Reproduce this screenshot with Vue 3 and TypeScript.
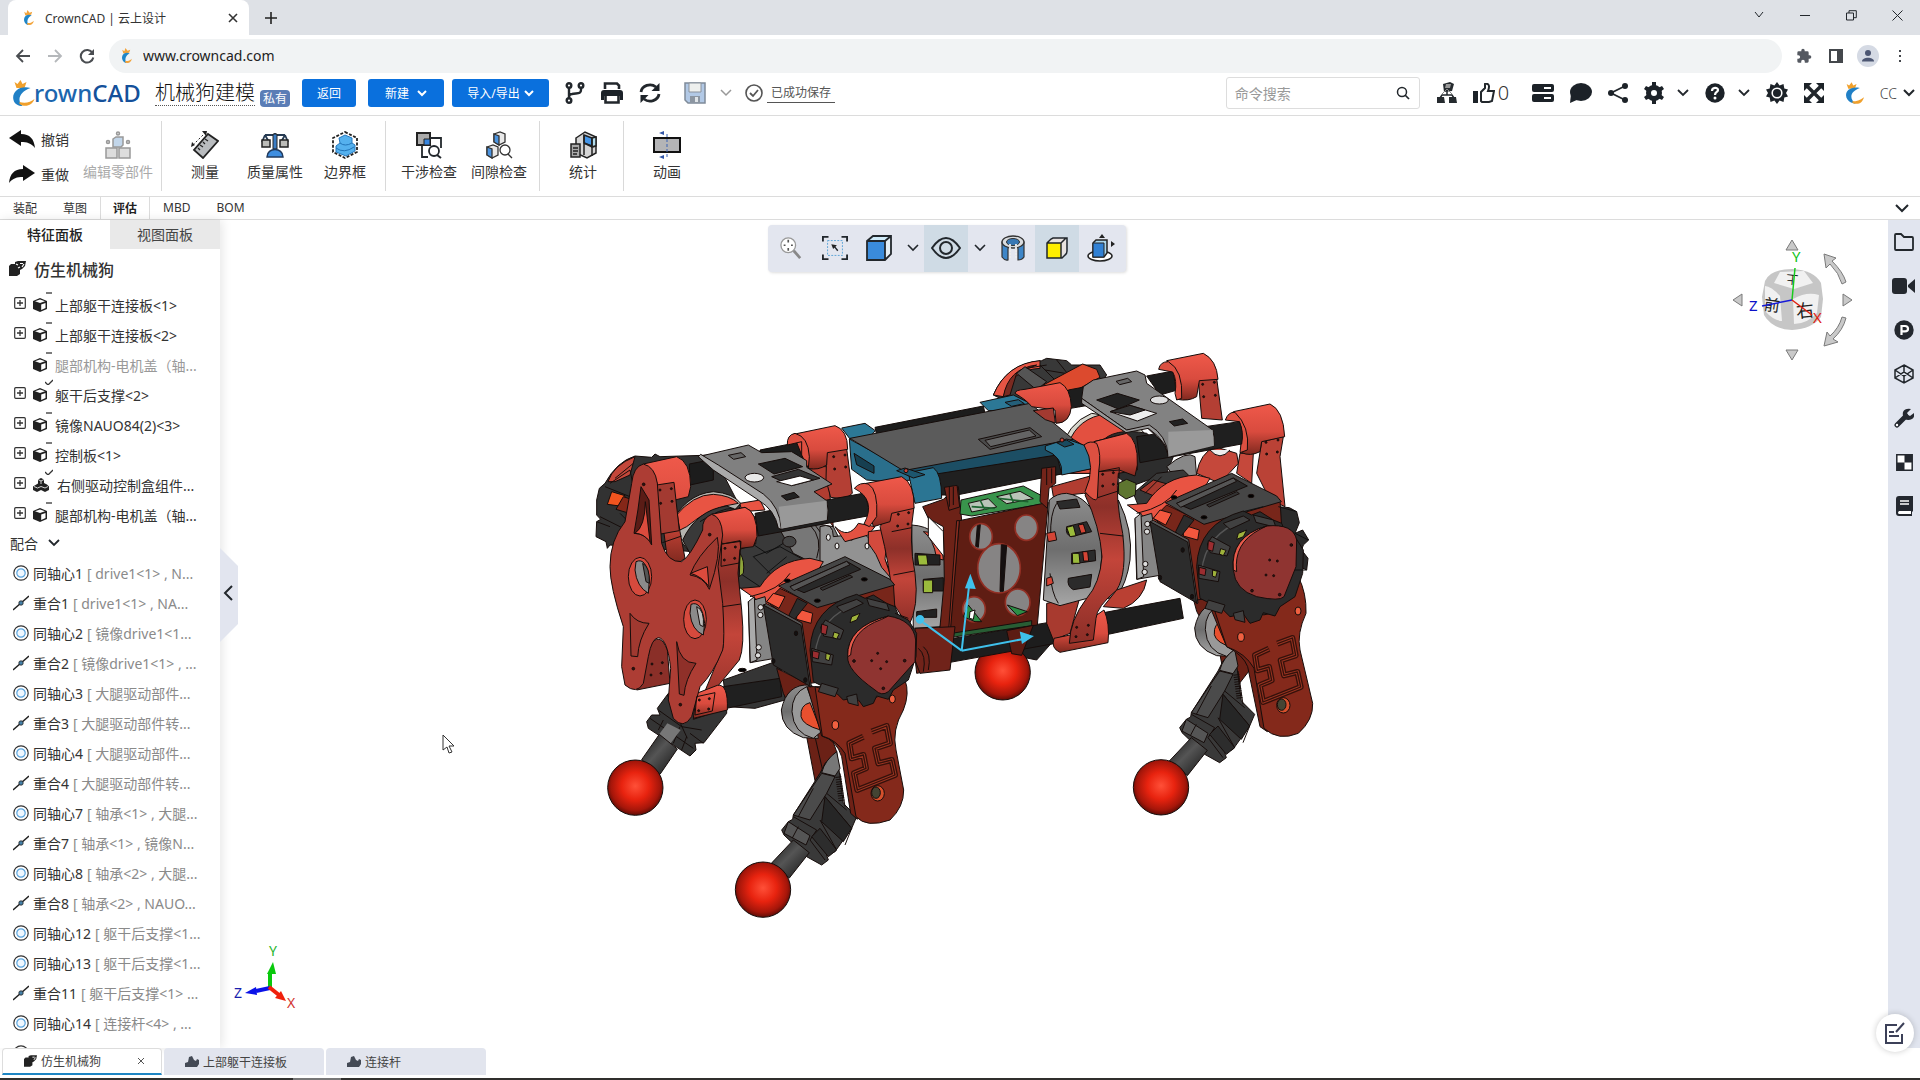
<script setup lang="ts">
import { ref } from 'vue'

interface TreeNode { label: string; mark: 'dash' | 'check'; expandable: boolean; hidden?: boolean; group?: boolean }
interface Mate { kind: 'concentric' | 'coincident'; name: string; refs: string }

const address = ref('www.crowncad.com')
const command = ref('')

const tree: TreeNode[] = [
  { label: '上部躯干连接板<1>', mark: 'dash', expandable: true },
  { label: '上部躯干连接板<2>', mark: 'dash', expandable: true },
  { label: '腿部机构-电机盖（轴...', mark: 'dash', expandable: false, hidden: true },
  { label: '躯干后支撑<2>', mark: 'check', expandable: true },
  { label: '镜像NAUO84(2)<3>', mark: 'dash', expandable: true },
  { label: '控制板<1>', mark: 'dash', expandable: true },
  { label: '右侧驱动控制盒组件...', mark: 'check', expandable: true, group: true },
  { label: '腿部机构-电机盖（轴...', mark: 'dash', expandable: true },
]

const mates: Mate[] = [
  { kind: 'concentric', name: '同轴心1', refs: '[ drive1<1> , N...' },
  { kind: 'coincident', name: '重合1', refs: '[ drive1<1> , NA...' },
  { kind: 'concentric', name: '同轴心2', refs: '[ 镜像drive1<1...' },
  { kind: 'coincident', name: '重合2', refs: '[ 镜像drive1<1> , ...' },
  { kind: 'concentric', name: '同轴心3', refs: '[ 大腿驱动部件...' },
  { kind: 'coincident', name: '重合3', refs: '[ 大腿驱动部件转...' },
  { kind: 'concentric', name: '同轴心4', refs: '[ 大腿驱动部件...' },
  { kind: 'coincident', name: '重合4', refs: '[ 大腿驱动部件转...' },
  { kind: 'concentric', name: '同轴心7', refs: '[ 轴承<1> , 大腿...' },
  { kind: 'coincident', name: '重合7', refs: '[ 轴承<1> , 镜像N...' },
  { kind: 'concentric', name: '同轴心8', refs: '[ 轴承<2> , 大腿...' },
  { kind: 'coincident', name: '重合8', refs: '[ 轴承<2> , NAUO...' },
  { kind: 'concentric', name: '同轴心12', refs: '[ 躯干后支撑<1...' },
  { kind: 'concentric', name: '同轴心13', refs: '[ 躯干后支撑<1...' },
  { kind: 'coincident', name: '重合11', refs: '[ 躯干后支撑<1> ...' },
  { kind: 'concentric', name: '同轴心14', refs: '[ 连接杆<4> , ...' },
  { kind: 'concentric', name: '', refs: '' },
]

const ribbonTabs = ['装配', '草图', '评估', 'MBD', 'BOM']
const docTabs = ['仿生机械狗', '上部躯干连接板', '连接杆']
</script>

<template>
  <div class="app">
    <div class="tabstrip">
      <div class="browser-tab">
        <svg class="fav" viewBox="0 0 24 32"><path d="M4 5l4 3 2-6 4 5 5-2-2 6-11 1z" fill="#f2a33a"/><path d="M18 12C8 8 2 16 4 23c1 4 5 7 8 7-4-7-2-14 6-18z" fill="#1f86c8"/><path d="M10 29c6 3 11-1 12-7-4 4-8 5-13 4z" fill="#f2a33a"/></svg>
        <span>CrownCAD | 云上设计</span>
        <button class="bare tab-x" aria-label="关闭标签页"><svg width="10" height="10" viewBox="0 0 10 10"><path d="M1 1l8 8M9 1l-8 8" stroke="#333" stroke-width="1.6"/></svg></button>
      </div>
      <button class="bare newtab" aria-label="新标签页"><svg width="12" height="12" viewBox="0 0 12 12"><path d="M6 0v12M0 6h12" stroke="#222" stroke-width="1.6"/></svg></button>
      <div class="winctl">
        <button class="bare" aria-label="搜索标签页"><svg width="10" height="8" viewBox="0 0 10 8"><path d="M1 1l4 5 4-5" class="ln thin"/></svg></button>
        <button class="bare" aria-label="最小化"><svg width="10" height="8" viewBox="0 0 10 8"><path d="M0 4.500h10" class="ln thin"/></svg></button>
        <button class="bare" aria-label="还原"><svg width="11" height="11" viewBox="0 0 11 11"><path d="M.5 3h7v7h-7zM3 3V.7h7.300v7H7.500" class="ln thin"/></svg></button>
        <button class="bare" aria-label="关闭"><svg width="11" height="11" viewBox="0 0 11 11"><path d="M.5.5l10 10M10.500.5l-10 10" class="ln thin"/></svg></button>
      </div>
    </div>

    <div class="browser-bar">
      <button class="bare nav" aria-label="后退"><svg width="16" height="16" viewBox="0 0 16 16"><path d="M15 8H2M8 2L2 8l6 6" fill="none" stroke="#4a4d51" stroke-width="1.800"/></svg></button>
      <button class="bare nav" aria-label="前进"><svg width="16" height="16" viewBox="0 0 16 16"><path d="M1 8h13M8 2l6 6-6 6" fill="none" stroke="#b5b8bb" stroke-width="1.800"/></svg></button>
      <button class="bare nav" aria-label="重新加载"><svg width="16" height="16" viewBox="0 0 16 16"><path d="M13.500 5A6.300 6.300 0 1 0 14.300 9.500" fill="none" stroke="#4a4d51" stroke-width="2"/><path d="M15 1v6H9z" fill="#4a4d51"/></svg></button>
      <div class="omnibox">
        <svg class="fav" viewBox="0 0 24 32"><path d="M4 5l4 3 2-6 4 5 5-2-2 6-11 1z" fill="#f2a33a"/><path d="M18 12C8 8 2 16 4 23c1 4 5 7 8 7-4-7-2-14 6-18z" fill="#1f86c8"/><path d="M10 29c6 3 11-1 12-7-4 4-8 5-13 4z" fill="#f2a33a"/></svg>
        <input v-model="address" type="text" aria-label="地址栏" />
      </div>
      <div class="ext">
        <button class="bare" aria-label="扩展程序"><svg width="16" height="16" viewBox="0 0 24 24"><path d="M20.500 11H19V7a2 2 0 0 0-2-2h-4V3.500a2.500 2.500 0 0 0-5 0V5H4a2 2 0 0 0-2 2v3.800h1.500a2.700 2.700 0 0 1 0 5.400H2V20a2 2 0 0 0 2 2h3.800v-1.500a2.700 2.700 0 0 1 5.400 0V22H17a2 2 0 0 0 2-2v-4h1.500a2.500 2.500 0 0 0 0-5z" fill="#555961"/></svg></button>
        <button class="bare" aria-label="侧边栏"><svg width="14" height="14" viewBox="0 0 14 14"><path d="M1 1h12v12H1z" fill="none" stroke="#44474c" stroke-width="2"/><path d="M8 1h5v12H8z" fill="#44474c"/></svg></button>
        <button class="bare" aria-label="用户"><svg width="22" height="22" viewBox="0 0 22 22"><circle cx="11" cy="11" r="11" fill="#d5dae4"/><circle cx="11" cy="8" r="3" fill="#4c5672"/><path d="M5 16.500c0-5 12-5 12 0z" fill="#4c5672"/></svg></button>
        <button class="bare" aria-label="菜单"><svg width="4" height="14" viewBox="0 0 4 14"><path d="M1 1h2v2H1zM1 6h2v2H1zM1 11h2v2H1z" fill="#44474c"/></svg></button>
      </div>
    </div>

    <header class="header">
      <div class="brand">
        <svg width="24" height="28" viewBox="0 0 23 28"><path d="M2 3l3 2 3-4 2 4 4-2-2 6H4z" fill="#f0a02c"/><path d="M18 9C6 6-1 14 1 21c1 4 5 6 9 6C4 21 7 13 18 9z" fill="#2080c6"/><path d="M7 25c6 4 13 1 15-5-4 3-9 5-15 3z" fill="#f0a02c"/></svg><span class="brand-txt">rown<b>CAD</b></span>
      </div>
      <span class="doc-name">机械狗建模</span>
      <span class="badge">私有</span>
      <button class="btn b1">返回</button>
      <button class="btn b2">新建<svg width="10" height="7" viewBox="0 0 10 7"><path d="M1 1l4 4 4-4" fill="none" stroke="#fff" stroke-width="2"/></svg></button>
      <button class="btn b3">导入/导出<svg width="10" height="7" viewBox="0 0 10 7"><path d="M1 1l4 4 4-4" fill="none" stroke="#fff" stroke-width="2"/></svg></button>
      <div class="tools">
        <button class="bare" aria-label="分支"><svg width="20" height="22" viewBox="0 0 20 22"><g class="ln" stroke-width="2.400"><circle cx="4" cy="3.500" r="2.300"/><circle cx="16" cy="3.500" r="2.300"/><circle cx="4" cy="18.500" r="2.300"/><path d="M4 6v10M16 6v2c0 4-3 3-9 4-2 0-3 1-3 3"/></g></svg></button>
        <button class="bare" aria-label="打印"><svg width="22" height="22" viewBox="0 0 22 22"><path d="M4 7V1.500h12l2 2V7" class="ln" stroke-width="2.600"/><path d="M0 18V11q0-3 3-3h16q3 0 3 3v7h-3v-4H3v4z" fill="#1c2228"/><path d="M4.500 14v6.500h13V14" class="ln" stroke-width="2.600"/></svg></button>
        <button class="bare" aria-label="刷新"><svg width="22" height="20" viewBox="0 0 22 20"><path d="M2 9A9 8 0 0 1 17 4M20 11A9 8 0 0 1 5 16" class="ln" stroke-width="2.800"/><path d="M20.500 0v8h-8zM1.500 20v-8h8z" fill="#1c2228"/></svg></button>
      </div>
      <button class="bare save" aria-label="保存"><svg width="22" height="22" viewBox="0 0 22 22"><path d="M1 1h20v20H4l-3-3z" fill="#b2c9e6" stroke="#7f8b99" stroke-width="1.500"/><path d="M5 1h12v9H5z" fill="#eef0ee" stroke="#8a929c"/><path d="M6 14h10v7H6z" fill="#8c96a2"/><path d="M11 15h3v5h-3z" fill="#dfe4e8"/></svg></button>
      <button class="bare" aria-label="保存选项"><svg width="12" height="8" viewBox="0 0 12 8"><path d="M1 1l5 5 5-5" fill="none" stroke="#999" stroke-width="1.500"/></svg></button>
      <svg class="okico" width="18" height="18" viewBox="0 0 18 18"><circle cx="9" cy="9" r="8" fill="none" stroke="#555" stroke-width="1.600"/><path d="M5 9l3 3 5-6" fill="none" stroke="#555" stroke-width="1.800"/></svg>
      <a class="saved" href="#">已成功保存</a>
      <div class="search"><input v-model="command" type="text" placeholder="命令搜索" aria-label="命令搜索" /><svg width="14" height="14" viewBox="0 0 14 14"><circle cx="6" cy="6" r="4.500" class="ln" stroke-width="1.500"/><path d="M9 9l4 4" class="ln" stroke-width="1.700"/></svg></div>
      <div class="right-tools">
        <button class="bare" aria-label="协作"><svg width="20" height="22" viewBox="0 0 20 22"><path d="M6 2l7-2 4 2-2 7-8 1z" fill="#252a2e"/><path d="M9 2h5l-1 4H8z" fill="#999"/><path d="M10 9v4M3 16l2-3h10l2 3" class="ln" stroke-width="1.500"/><path d="M0 15h7l1 6H0zM12 15h7l1 6h-8z" fill="#252a2e"/><path d="M5 12l5-5 5 5" stroke="#888" fill="none"/></svg></button>
        <button class="bare like" aria-label="点赞"><svg width="22" height="20" viewBox="0 0 22 20"><path d="M0 8h5v12H0z" fill="#1c2228"/><path d="M8 18V9l4-4V1c4-1 5 2 3 7h6l-2 10-3 1H9z" class="ln" stroke-width="2"/></svg><span>0</span></button>
        <button class="bare" aria-label="服务器"><svg width="22" height="18" viewBox="0 0 22 18"><rect width="22" height="8" rx="2" fill="#1c2228"/><rect y="10" width="22" height="8" rx="2" fill="#1c2228"/><path d="M12 3h7v2h-7zM12 13h7v2h-7z" fill="#fff"/></svg></button>
        <button class="bare" aria-label="消息"><svg width="22" height="20" viewBox="0 0 22 20"><ellipse cx="11" cy="9" rx="11" ry="9" fill="#1c2228"/><path d="M1 11l-1 9 9-4z" fill="#1c2228"/></svg></button>
        <button class="bare" aria-label="分享"><svg width="20" height="20" viewBox="0 0 20 20"><path d="M17 3L3 10l14 7" class="ln" stroke-width="1.800"/><circle cx="17" cy="3" r="3" fill="#1c2228"/><circle cx="3" cy="10" r="3" fill="#1c2228"/><circle cx="17" cy="17" r="3" fill="#1c2228"/></svg></button>
        <button class="bare pair" aria-label="设置"><svg width="20" height="22" viewBox="0 0 20 22"><circle cx="10" cy="11" r="5.500" fill="none" stroke="#1c2228" stroke-width="5"/><path d="M8 0h4v4H8zM8 18h4v4H8zM0 7l2-3 4 2-2 4zM20 7l-2-3-4 2 2 4zM0 15l2 3 4-2-2-4zM20 15l-2 3-4-2 2-4z" fill="#1c2228"/></svg><svg width="12" height="8" viewBox="0 0 12 8"><path d="M1 1l5 5 5-5" class="ln" stroke-width="1.800"/></svg></button>
        <button class="bare pair" aria-label="帮助"><svg width="20" height="20" viewBox="0 0 20 20"><circle cx="10" cy="10" r="9.700" fill="#1c2228"/><path d="M7 8c0-4 6-4 6-1 0 2-3 2-3 5" fill="none" stroke="#fff" stroke-width="2.200"/><circle cx="10" cy="15" r="1.500" fill="#fff"/></svg><svg width="12" height="8" viewBox="0 0 12 8"><path d="M1 1l5 5 5-5" class="ln" stroke-width="1.800"/></svg></button>
        <button class="bare" aria-label="主题"><svg width="22" height="22" viewBox="0 0 22 22"><path d="M11 0l2.600 3.600L17.500 2l.8 4.400 3.700 1.200L20 11l2 3.400-3.700 1.200-.8 4.400-3.900-1.600L11 22l-2.600-3.600L4.500 20l-.8-4.400L0 14.400 2 11 0 7.600l3.700-1.200L4.500 2l3.900 1.600z" fill="#1c2228"/><circle cx="11" cy="11" r="4.800" fill="none" stroke="#fff" stroke-width="1.600"/></svg></button>
        <button class="bare" aria-label="全屏"><svg width="20" height="20" viewBox="0 0 20 20"><path d="M0 0h8L0 8zM20 0v8l-8-8zM0 20v-8l8 8zM20 20h-8l8-8z" fill="#1c2228"/><path d="M3 3l14 14M17 3L3 17" class="ln" stroke-width="3.500"/></svg></button>
        <svg class="ulogo" width="19" height="26" viewBox="0 0 23 28"><path d="M2 3l3 2 3-4 2 4 4-2-2 6H4z" fill="#f0a02c"/><path d="M18 8C4 5-2 15 3 22c2 3 6 5 10 5C4 20 7 12 18 8z" fill="#2080c6"/><path d="M9 26c7 3 12 0 14-7-5 4-9 5-14 5z" fill="#f0a02c"/></svg>
        <button class="bare user"><span>CC</span><svg width="12" height="8" viewBox="0 0 12 8"><path d="M1 1l5 5 5-5" class="ln" stroke-width="2"/></svg></button>
      </div>
    </header>

    <div class="ribbon">
      <div class="grp first">
        <div class="undo">
          <button class="bare"><svg width="26" height="18" viewBox="0 0 26 18"><path d="M0 8L12 0v4c9 0 13 5 14 14-4-5-8-6-14-6v4z" fill="#111"/></svg>撤销</button>
          <button class="bare"><svg width="26" height="18" viewBox="0 0 26 18"><path d="M26 8L14 0v4C5 4 1 9 0 18c4-5 8-6 14-6v4z" fill="#111"/></svg>重做</button>
        </div>
        <button class="bare item off" disabled><svg width="28" height="28" viewBox="0 0 28 28"><g stroke="#999" stroke-width="1.500" fill="#ddd"><path d="M9 8l3-2h7v8l-2 2H9z" fill="#c2d6ea"/><path d="M2 17h11v10H2zM15 17h11v10H15z"/><circle cx="14" cy="2.500" r="1.500"/><circle cx="4" cy="11" r="1.500"/><circle cx="24" cy="11" r="1.500"/></g></svg><span>编辑零部件</span></button>
      </div>
      <div class="grp">
        <button class="bare item"><svg width="28" height="28" viewBox="0 0 28 28"><path d="M17 3l10 7-15 17L3 19z" fill="#b9bcbf" stroke="#222" stroke-width="1.800"/><path d="M14 8l3 2M12 11l2 2M9 14l3 2M7 17l2 2" stroke="#222" stroke-width="1.200"/><path d="M2 14L13 3" stroke="#222" stroke-dasharray="2 2"/><path d="M0 16l1-5 3 3zM11 0h5l-1 5z" fill="#222"/></svg><span>测量</span></button>
        <button class="bare item"><svg width="28" height="28" viewBox="0 0 28 28"><path d="M4 4h20M14 2v18M4 4L1 11M4 4l4 7M24 4l-4 7M24 4l3 7" stroke="#263a52" stroke-width="1.800" fill="none"/><path d="M1 9h8v7H1zM19 9h8v7h-8z" fill="#bcbcb8" stroke="#222" stroke-width="1.500"/><path d="M12 3h4v15h-4z" fill="#3a7cc4" stroke="#222"/><path d="M6 26c0-10 16-10 16 0z" fill="#3f8ee0" stroke="#223a5c" stroke-width="1.500"/></svg><span>质量属性</span></button>
        <button class="bare item"><svg width="28" height="28" viewBox="0 0 28 28"><path d="M14 1l12 6v14l-12 6-12-6V7z" fill="none" stroke="#222" stroke-width="1.800" stroke-dasharray="3 1.500"/><path d="M8 7l6-3 7 3v5l3 2v6l-9 5-10-4v-6l4-3z" fill="#55b1ee" stroke="#2477bd"/><path d="M9 12q5 4 12 0M5 17q8 6 18-1" fill="none" stroke="#2274b8"/></svg><span>边界框</span></button>
      </div>
      <div class="grp">
        <button class="bare item"><svg width="28" height="28" viewBox="0 0 28 28"><path d="M2 2h13v12H2z" fill="#aaa" stroke="#222" stroke-width="2"/><path d="M9 8h6v6H9z" fill="#3886df" stroke="#222"/><path d="M15 7h11v10M7 14v12h6" class="ln" stroke-width="1.800"/><circle cx="19" cy="20" r="5" class="ln" stroke-width="1.800"/><path d="M22 24l4 3" class="ln" stroke-width="2"/></svg><span>干涉检查</span></button>
        <button class="bare item"><svg width="28" height="28" viewBox="0 0 28 28"><g stroke="#333" stroke-width="1.300" fill="#e9e9e9"><path d="M9 3l6-2 5 2v8l-6 3-5-3zM2 16l6-2 5 2v8l-6 3-5-3z"/><path d="M9 3l5 2v9l-5-3zM2 16l5 2v9l-5-3z" fill="#4c94e0"/><circle cx="20" cy="19" r="5" fill="#fff"/><path d="M23 23l4 4"/></g></svg><span>间隙检查</span></button>
      </div>
      <div class="grp">
        <button class="bare item"><svg width="28" height="28" viewBox="0 0 28 28"><g stroke="#222" stroke-width="1.500"><path d="M7 7l9-6 11 5v16l-9 5-11-5z" fill="#d6d6d6"/><path d="M15 4l8 3v8l-8-3z" fill="#4596e8"/><path d="M23 7l4-1v9l-4 1z" fill="#b2dcec"/><path d="M15 12l8 4 4-1M23 7v18M15 4v20" fill="none"/><path d="M2 13h9v13H2z" fill="#aaa"/><path d="M4 17h5M4 20h5M4 23h4"/></g></svg><span>统计</span></button>
      </div>
      <div class="grp last">
        <button class="bare item"><svg width="28" height="28" viewBox="0 0 28 28"><path d="M1 7h26v14H1z" fill="#b4b4b6" stroke="#111" stroke-width="2"/><path d="M14 3v24" stroke="#3a62b5" stroke-dasharray="3 2"/><path d="M6 2l5-2v4zM6 26l5-2v4z" fill="#3156a8"/></svg><span>动画</span></button>
      </div>
    </div>

    <nav class="rtabs">
      <button v-for="t in ribbonTabs" :key="t" class="bare" :class="{ on: t === '评估' }">{{ t }}</button>
      <button class="bare fold" aria-label="折叠功能区"><svg width="14" height="10" viewBox="0 0 14 10"><path d="M1 2l6 6 6-6" class="ln" stroke-width="2"/></svg></button>
    </nav>

    <main class="main">
      <aside class="panel">
        <div class="ptabs"><button class="bare on">特征面板</button><button class="bare">视图面板</button></div>
        <div class="root"><svg width="17" height="15" viewBox="0 0 17 15"><path d="M0 5l2-2h4v-2l3-1h8l-1 5-3 3-2 1v4l-3 2H0z" fill="#222"/><path d="M11 2.500h3M13 6l2-3M7 3l2 1M9 7l2-1" stroke="#fff" stroke-width="1.200"/></svg>仿生机械狗</div>
        <ul class="tree">
          <li v-for="(n, i) in tree" :key="i" :class="{ dim: n.hidden }">
            <button v-if="n.expandable" class="bare exp" aria-label="展开"><svg width="12" height="12" viewBox="0 0 12 12"><rect x=".7" y=".7" width="10.600" height="10.600" rx="1" fill="none" stroke="#333" stroke-width="1.200"/><path d="M6 3v6M3 6h6" stroke="#333" stroke-width="1.300"/></svg></button>
            <span v-else class="exp"></span>
            <svg v-if="n.group" class="cube wide" viewBox="0 0 16 14"><path d="M5 1.500L8 0l3 1.500V5l3 1.500 2 2V12l-4 2-4-2-4 2-4-2V8.500l5-3z" fill="#222"/><path d="M5 1.500L8 3l3-1.500M1 8.500L4.500 10 8 8.500l4 1.500 3-1.500M8 3v3" fill="none" stroke="#fff" stroke-width=".8"/></svg>
            <svg v-else class="cube" viewBox="0 0 14 14"><path d="M7 0l7 3v8l-7 3-7-3V3z" fill="#222"/><path d="M7 1.500L12 3.300 7 5 2 3.300z" fill="#fff"/><path d="M8.200 6.400L12.500 5v5L8.200 12z" fill="#fff"/></svg>
            <span class="mark"><svg width="8" height="6" viewBox="0 0 8 6"><path :d="n.mark === 'dash' ? 'M1 4h6' : 'M0 3l3 3 5-5'" fill="none" stroke="#333" stroke-width="1.300"/></svg></span>
            <span class="lbl">{{ n.label }}</span>
          </li>
        </ul>
        <button class="bare mhead">配合<svg width="12" height="8" viewBox="0 0 12 8"><path d="M1 1l5 5 5-5" class="ln" stroke-width="1.800"/></svg></button>
        <ul class="mates">
          <li v-for="(m, i) in mates" :key="i">
            <svg width="16" height="16" viewBox="0 0 16 16">
              <template v-if="m.kind === 'concentric'"><circle cx="8" cy="8" r="7.200" fill="#fff" stroke="#333" stroke-width="1.200"/><circle cx="8" cy="8" r="4.200" fill="#eef7ff" stroke="#5aa5de" stroke-width="1.200"/></template>
              <template v-else><path d="M0 15L16 1" stroke="#222" stroke-width="1.400"/><circle cx="8" cy="8" r="2.200" fill="#4480a8" stroke="#222" stroke-width=".8"/></template>
            </svg>
            <template v-if="m.name"><span>{{ m.name }}</span><span class="refs">{{ m.refs }}</span></template>
          </li>
        </ul>
      </aside>

      <section class="canvas">
        <button class="bare handle" aria-label="收起面板"><svg width="18" height="94" viewBox="0 0 18 94"><path d="M0 0l18 18v58L0 94z" fill="#e2e5ef"/><path d="M12 38l-7 7 7 7" class="ln" stroke-width="2"/></svg></button>

        <div class="viewbar">
          <button class="bare c44" aria-label="缩放"><svg width="22" height="24" viewBox="0 0 24 26"><circle cx="9" cy="10" r="8" fill="#fff" stroke="#999" stroke-width="1.400"/><path d="M9 4v3M9 13v3M4 10h2M12 10h2" stroke="#555" stroke-width="1.800"/><path d="M15 16l7 8" stroke="#888" stroke-width="3"/></svg></button>
          <button class="bare c44" aria-label="适合窗口"><svg width="26" height="26" viewBox="0 0 28 26"><path d="M1 6V1h6M21 1h6v5M27 20v5h-6M7 25H1v-5" class="ln" stroke-width="2"/><path d="M6 5h16v16H6z" fill="none" stroke="#58a2d6" stroke-dasharray="2 1.500"/><path d="M10 9l6 1-4 4z" fill="#222"/><path d="M13 11l4 5" class="ln" stroke-width="1.500"/></svg></button>
          <button class="bare c44" aria-label="显示样式"><svg width="26" height="26" viewBox="0 0 26 26"><path d="M1 6l6-5h18l-6 5z" fill="#cfeaf8"/><path d="M19 6l6-5v18l-6 6z" fill="#e5eef4"/><path d="M1 6h18v19H1z" fill="#3a8bdb"/><path d="M1 6l6-5h18v18l-6 6H1zM1 6h18v19M19 6l6-5" class="ln" stroke-width="1.800"/></svg></button>
          <button class="bare c24" aria-label="显示样式选项"><svg width="12" height="8" viewBox="0 0 12 8"><path d="M1 1l5 5 5-5" class="ln" stroke-width="1.600"/></svg></button>
          <button class="bare c44 on" aria-label="可见性"><svg width="30" height="22" viewBox="0 0 30 22"><path d="M1 11Q15-9 29 11 15 31 1 11z" class="ln" stroke-width="2"/><circle cx="15" cy="11" r="6" class="ln" stroke-width="2"/></svg></button>
          <button class="bare c24" aria-label="可见性选项"><svg width="12" height="8" viewBox="0 0 12 8"><path d="M1 1l5 5 5-5" class="ln" stroke-width="1.600"/></svg></button>
          <button class="bare c44" aria-label="剖视图"><svg width="24" height="26" viewBox="0 0 24 26"><path d="M1 7v15q3 4 6 3V14q0-3 2-4h6q2 1 2 4v11q4 0 6-3V7z" fill="#3e86c8" stroke="#333" stroke-width="1.200"/><ellipse cx="12" cy="7" rx="11" ry="6" fill="#d9dcdf" stroke="#333" stroke-width="1.300"/><ellipse cx="12" cy="7" rx="6.500" ry="3.500" fill="#3878b4" stroke="#333"/><path d="M9 9v14M15 9v14" stroke="#eee" stroke-width="1.800" stroke-dasharray="2 1"/></svg></button>
          <button class="bare c44 on" aria-label="实体显示"><svg width="22" height="22" viewBox="0 0 22 22"><path d="M1 6l5-5h14v14l-5 6z" fill="#e8e3e0"/><path d="M1 6h14v15H1z" fill="#ffee00"/><path d="M1 6l4-4 2-1h14v13q0 3-2 4l-3 3H1zM1 6h14v15M15 6l5-5" class="ln" stroke-width="1.500"/></svg></button>
          <button class="bare c44" aria-label="旋转视图"><svg width="28" height="28" viewBox="0 0 28 28"><ellipse cx="13" cy="22" rx="12" ry="5" fill="#fff" stroke="#222" stroke-width="1.500"/><path d="M6 9l3-3h11v13l-3 4H6z" fill="#a9d6ed" stroke="#222" stroke-width="1.500"/><path d="M6 9h11v14H6z" fill="#3181d4" stroke="#222"/><path d="M12 4l3-4 3 4zM24 7l4 3-4 3z" fill="#222"/></svg></button>
        </div>

        <svg class="robot" viewBox="0 0 2280 1770" width="760" height="590" role="img" aria-label="仿生机械狗模型">
          <defs>
            <radialGradient id="ball" cx=".5" cy=".47" r=".55"><stop offset="0" stop-color="#ff5038"/><stop offset=".45" stop-color="#e8230f"/><stop offset=".8" stop-color="#a5160a"/><stop offset="1" stop-color="#4e0a05"/></radialGradient>
            <linearGradient id="tube" x1="0" y1="0" x2="0" y2="1"><stop offset="0" stop-color="#ef594a"/><stop offset=".55" stop-color="#d94b3e"/><stop offset="1" stop-color="#80291f"/></linearGradient>
            <linearGradient id="side" x1="0" y1="0" x2="0" y2="1"><stop offset="0" stop-color="#c94538"/><stop offset=".35" stop-color="#8d3029"/><stop offset=".6" stop-color="#c3453a"/><stop offset="1" stop-color="#8b2e27"/></linearGradient>
            <linearGradient id="rod" x1="0" y1="0" x2="1" y2="1"><stop offset="0" stop-color="#111"/><stop offset=".45" stop-color="#555"/><stop offset="1" stop-color="#111"/></linearGradient>
            <linearGradient id="gray" x1="0" y1="0" x2="0" y2="1"><stop offset="0" stop-color="#8e8e8e"/><stop offset=".5" stop-color="#6e6e6e"/><stop offset="1" stop-color="#a6a6a6"/></linearGradient>
            <g id="limb">
              <path d="M770 1235L735 1270 720 1300 640 1425 638 1438 625 1445 605 1470 612 1485 680 1550 725 1575 745 1560 740 1545 765 1535 815 1465 830 1430 790 1390z" fill="#393939"/>
              <path d="M770 1235Q735 1260 725 1298L765 1308 780 1285z" fill="#777"/>
              <path d="M725 1300l40 10-25 50-50 80-50-15 35-52z" fill="#4b4b4b"/>
              <path d="M625 1445l65 42-12 28-66-35z" fill="#555"/>
              <path d="M640 1430l70 40-20 30M690 1500l45 60M720 1440l50 90M735 1370l80 95-20 50M655 1460l-18 34M780 1300l15 100M740 1360l60 50M700 1345l-45 85" fill="none" stroke-width="3"/>
              <path d="M735 1370l80 95-25 40-65-60z" fill="#262626"/><path d="M695 1490l25-25 50 65-25 20z" fill="#2d2d2d"/>
              <path d="M775 1310l10 75" stroke-width="18" stroke-dasharray="3 4"/>
              <path d="M640 1500l48 38-60 76-54-44z" fill="url(#rod)"/>
              <circle cx="549" cy="1649" r="83" fill="url(#ball)"/>
            </g>
            <g id="leg-back">
              <path d="M590 985L700 1040 770 1235 720 1300 705 1322 680 1190 610 1060z" fill="#6b2116"/>
              <path d="M705 1190l25 110" fill="none"/>
              <path d="M690 1035Q620 1030 604 1110 604 1170 670 1193L715 1195z" fill="url(#gray)"/>
              <path d="M680 1040Q635 1060 636 1115 640 1180 700 1195L730 1170z" fill="#999"/>
              <path d="M690 1088Q660 1095 663 1130 668 1155 722 1170z" fill="#e8502f"/>
            </g>
            <g id="leg-detail">
              <path d="M850 1190l-42 20 7 45 35-10 8 40-36 15 10 50 113-45-10-45-40 10-10-45 45-15-10-52-45 17" fill="none" stroke="#35110b" stroke-width="18"/>
              <path d="M850 1190l-42 20 7 45 35-10 8 40-36 15 10 50 113-45-10-45-40 10-10-45 45-15-10-52-45 17" fill="none" stroke="#9b3421" stroke-width="10"/>
              <path d="M850 1190l-42 20 7 45 35-10 8 40-36 15 10 50 113-45-10-45-40 10-10-45 45-15-10-52-45 17" fill="none" stroke="#35110b" stroke-width="4"/>
              <ellipse cx="893" cy="1360" rx="20" ry="23" fill="#d6502c"/><ellipse cx="888" cy="1358" rx="13" ry="17" fill="#443"/>
              <ellipse cx="937" cy="1077" rx="9" ry="12" fill="#f06040"/><ellipse cx="766" cy="1155" rx="10" ry="13" fill="#f06040"/>
            </g>
            <g id="motor">
              <path d="M482 745L540 740Q590 660 690 655L730 665 650 800 560 800z" fill="#e95443"/>
              <path d="M510 770q90-20 120-70" fill="none"/>
              <path d="M505 785L555 770 585 955 510 968z" fill="#858585"/><path d="M505 785l18-15 8 190-20 8z" fill="#aaa"/>
              <g fill="#ddd"><circle cx="542" cy="802" r="8"/><circle cx="541" cy="825" r="8"/><circle cx="536" cy="922" r="8"/><circle cx="534" cy="946" r="8"/></g>
              <path d="M560 785L600 745 715 800 940 730 945 810 900 1000 690 1030 660 860z" fill="#78261a"/>
              <path d="M650 805l48 15-5 30-43-12zM560 785l20-25 35 10-18 35z" fill="#f2573e"/>
              <path d="M652 775l-25 50 15 15 40-50zM550 795L665 855 692 1040 580 975z" fill="#2c2c2c"/><path d="M550 795l10-4 106 58 28 190-4 2-27-185z" fill="#555"/>
              <path d="M596 738L795 650 930 718 944 735 712 803z" fill="#464646"/><path d="M630 740L800 664 842 688 672 758z" fill="#292929"/><path d="M630 740l170-76 10 10-168 78z" fill="#555"/><path d="M720 745l90-40 8 6-90 40z" fill="#333"/>
              <path d="M690 930Q695 800 830 763L855 775 880 765 920 790 945 800 955 825 985 840 1010 880 1008 950 985 1020 940 1050 925 1078 890 1068 880 1090 850 1100 830 1072 790 1080 770 1060 700 1025z" fill="#2b2b2b"/>
              <path d="M705 945Q715 830 835 790" fill="none" stroke="#555" stroke-width="4"/>
              <path d="M770 800l60-22 20 12-60 28zM722 862l14-22 55 30-10 28-50-10zM695 925l65 20-5 30-58-10zM725 1030l50 15-10 25-50-15zM800 1070l30-8 5 35-30-8zM860 775l60 15 8 22-60-15zM945 820l40 15" fill="#414141"/>
              <path d="M815 830l25-10-10 20-20 8zM762 876l16 5-8 16-12-5zM738 940l14 4-5 18-10-4z" fill="#9fb33c"/>
              <path d="M725 852l18 6-5 26-15-5zM698 932l20 5-3 20-18-5z" fill="#9b2d30"/>
              <ellipse cx="648" cy="880" rx="5" ry="7" fill="#111"/><ellipse cx="676" cy="1020" rx="5" ry="7" fill="#111"/><ellipse cx="580" cy="963" rx="5" ry="7" fill="#111"/><ellipse cx="622" cy="722" rx="9" ry="5"/><ellipse cx="712" cy="782" rx="9" ry="5"/><ellipse cx="853" cy="718" rx="9" ry="5"/>
            </g>
          </defs>

          <g stroke="#160d0b" stroke-width="3" stroke-linejoin="round">
            <!-- rear wheels -->
            <path d="M50 545L62 538 50 525 50 480 58 445 75 430Q110 365 165 348L215 352 225 342 240 350 400 345 480 500 400 640 90 615 82 625 78 605 48 590z" fill="#323232"/>
            <path d="M84 425Q100 375 165 350L150 405 105 425z" fill="#c4473a"/><path d="M95 455l40 12-8 32-45-6z" fill="#f2541f"/><path d="M130 470l30 10-12 40-40-12z" fill="#852718"/>
            <path d="M105 415l55-45M75 440l75 30M60 530l80 40M90 430l60-40 10 50M50 545l40 15M120 520l30 30" fill="none"/>
            <path d="M268 560Q315 462 400 455 460 460 482 490L340 650z" fill="#b5b5b0"/>
            <path d="M285 530Q340 463 400 463 450 466 475 490 390 500 320 560L300 570z" fill="#e85443"/>
            <path d="M308 600Q350 510 440 498L600 560 700 640 720 720 540 780 475 740 470 640 330 640z" fill="#393939"/>
            <path d="M360 545q60-40 100-40M500 600l60 40 50-30M520 650l80-30 90 50-80 70zM560 700l60-50M480 700l60 40" fill="none" stroke="#111"/>
            <path d="M480 640q15 20 10 60l-12 10z" fill="#8ea53a"/>
            <path d="M600 570Q620 540 700 550L760 560 800 640 740 690 640 640z" fill="#777"/><ellipse cx="628" cy="605" rx="20" ry="16" fill="#444"/><path d="M690 555q40 40 20 100M705 555q40 40 20 110" fill="none"/>
            <path d="M720 560Q760 545 760 590L850 580Q930 640 942 760L900 800 720 690z" fill="#929292"/>
            <g fill="#eee"><ellipse cx="745" cy="592" rx="6" ry="9"/><ellipse cx="771" cy="618" rx="6" ry="9"/><ellipse cx="814" cy="592" rx="6" ry="9"/><ellipse cx="861" cy="618" rx="6" ry="9"/></g>
            <path d="M480 490l60-10 15 30-70 5z" fill="#e85443"/>

            <g transform="translate(960 0)">
              <path d="M280 165Q320 70 425 62L440 55 500 62 515 75 600 75 620 105 540 200 300 175z" fill="#383838"/>
              <path d="M280 165Q320 70 420 62L420 85Q330 90 310 170z" fill="#e65544"/><path d="M310 170Q325 85 410 75L350 100 330 165z" fill="#792a21"/>
              <path d="M350 100l25-20 65 45-30 25zM420 75l60 60M435 90l60 10M470 60l40 50M380 85l60-10" fill="#555"/>
              <path d="M430 135L548 72 590 88 600 112 530 150 495 160z" fill="#dc4a2e"/>
              <path d="M480 340Q500 250 575 220L700 240 790 350 720 400 500 400z" fill="#d5d5cc"/><path d="M500 330Q520 245 600 225L700 290 680 400 500 400z" fill="#e35040"/><path d="M600 310Q640 260 740 280L820 350 800 400 690 440 640 400z" fill="#2d2d2d"/>
              <path d="M800 380Q860 330 885 350L890 410 830 420z" fill="#888"/>
              <path d="M700 460L770 400 850 390 880 420 800 500 720 510z" fill="#383838"/><path d="M720 450l40-30 70 20-40 40z" fill="#a4392e"/><path d="M735 460l50-50M760 470l60-50" fill="none"/><path d="M655 430l25-12 28 12-2 35-28 12-22-15z" fill="#5e7530"/>
              <path d="M890 400Q900 340 945 320L1010 340 1015 370 960 430z" fill="#c5483b"/><path d="M930 330q30 35 60 0" fill="#eee"/>
              <path d="M1020 340L1060 340 1055 430 1010 400z" fill="#c5483b"/>
            </g>

            <!-- upper rear rods and brackets -->
            <path d="M328 372L400 358 400 420 330 435zM540 330L665 305 670 365 540 365z" fill="#1c1c1c"/>
            <path d="M885 262L1210 198 1215 220 890 285z" fill="#1c1c1c"/>
            <path d="M650 430Q690 370 740 380L760 560 700 480z" fill="#b13d31"/>
            <path d="M740 335L800 325 817 460Q800 480 752 472L738 420z" fill="#b43f34"/>
            <path d="M640 283L765 257Q803 270 803 328L742 338 740 375Q715 392 685 385L665 345z" fill="url(#tube)"/>
            <path d="M622 315Q620 285 645 280 685 290 688 350L685 385 665 345 665 305z" fill="#de5041"/>
            <g fill="#33100c"><circle cx="761" cy="350" r="3"/><circle cx="795" cy="345" r="3"/><circle cx="764" cy="387" r="3"/><circle cx="797" cy="381" r="3"/></g>

            <!-- battery box -->
            <path d="M785 264L855 250 886 272 870 290 810 297z" fill="#2c7896"/>
            <path d="M1200 187L1300 165 1350 190 1320 210 1225 212z" fill="#2c7896"/><path d="M1275 187l40-8 18 12-38 8z" fill="#245f79"/>
            <path d="M808 297L975 388 1000 420 925 425 860 420 815 388z" fill="#2a6f8c"/><path d="M822 340l60 38v22l-52-26z" fill="#163f50"/>
            <path d="M970 388L1480 298 1540 335 1540 385 1080 465z" fill="#1c4e64"/>
            <path d="M810 295L1350 190 1480 298 970 392z" fill="#5b5b5b"/>
            <path d="M1195 298L1350 263 1385 290 1230 328z" fill="#4a4a4a"/><path d="M1215 301L1348 270 1368 288 1232 320z" fill="#646464"/>
            <path d="M1050 405L1430 345 1445 402 1130 465 1080 465z" fill="#202020"/>
            <path d="M985 398L1060 383Q1085 400 1085 475L1005 490z" fill="#2b7593"/><path d="M950 392l25-8 60 20-35 10z" fill="#1d566e"/>
            <path d="M1396 318L1460 297 1525 320Q1543 350 1540 385L1445 405Q1450 350 1396 330z" fill="#2b7593"/><path d="M1430 308l30-8 22 13-28 8z" fill="#184a5f"/><circle cx="1446" cy="300" r="6" fill="#c94538"/><circle cx="978" cy="392" r="6" fill="#c94538"/>

            <g transform="translate(960 0)">
              <path d="M505 150L600 132 600 190 512 205zM740 108L820 93 832 150 780 165z" fill="#1d1d1d"/>
              <path d="M345 160Q345 150 375 148L480 128Q512 145 514 200 510 250 468 250L465 210 395 200Q380 180 345 160z" fill="url(#tube)"/>
              <path d="M400 212l60-8 6 45-30-10z" fill="#a33a31"/>
              <path d="M895 120L950 115 967 240 905 235z" fill="#b43f34"/>
              <path d="M800 62L910 40Q950 60 954 118L898 122 890 170Q865 185 832 178L820 95z" fill="url(#tube)"/>
              <path d="M776 88Q780 65 805 65 850 90 845 175L830 180 825 160Q832 120 818 96z" fill="#dc5041"/>
              <path d="M1085 305L1150 290 1140 350 1155 500 1110 480 1070 400z" fill="#ba4236"/>
              <path d="M1000 215L1110 192Q1150 210 1154 290L1085 305 1080 335Q1050 350 1025 338L1018 245z" fill="url(#tube)"/>
              <path d="M976 240Q985 215 1005 217 1050 260 1042 330L1020 338Q1030 270 1018 245z" fill="#dc5041"/>
              <path d="M710 290L1018 245Q1032 275 1025 312L720 368z" fill="#1f1f1f"/>
              <path d="M545 175L550 140 580 120 710 93 735 105 740 130 938 270Q945 290 942 317L805 350Q800 315 770 290L740 262 680 270z" fill="#828282"/><path d="M545 175L680 270 748 255Q800 285 805 348L795 315Q775 285 745 265L678 278 545 190z" fill="#999"/>
              <path d="M590 180L652 160 718 180 655 207zM808 245l40-8 15 13-40 8z" fill="#222"/><path d="M630 215L690 196 770 220 712 243z" fill="#eee"/><path d="M630 215L690 196 735 210 690 225z" fill="#333"/>
              <ellipse cx="778" cy="180" rx="27" ry="12" fill="#ddd"/><path d="M648 124l35-9 12 10-36 9z" fill="#666"/><path d="M805 275L938 270 942 317 805 350z" fill="#9a9a9a" stroke="none"/>
              <g fill="#33100c"><circle cx="908" cy="133" r="3"/><circle cx="943" cy="127" r="3"/><circle cx="911" cy="170" r="3"/><circle cx="946" cy="166" r="3"/><circle cx="1098" cy="307" r="3"/><circle cx="1134" cy="300" r="3"/><circle cx="1100" cy="342" r="3"/><circle cx="1132" cy="336" r="3"/></g>
            </g>

            <!-- hidden foot, lower rods -->
            <path d="M1270 940L1440 880 1370 960z" fill="#222"/>
            <circle cx="1268" cy="997" r="83" fill="url(#ball)"/>
            <path d="M430 1020L600 960 615 1080 525 1105 440 1100z" fill="#353535"/><ellipse cx="487" cy="990" rx="12" ry="5"/>
            <path d="M430 1040L600 1015 605 1070 440 1105z" fill="#202020"/>
            <path d="M1000 915L1450 840 1455 905 1010 985z" fill="#1d1d1d"/>
            <path d="M1560 820L1800 775 1810 835 1575 885z" fill="#1d1d1d"/>

            <!-- central cylinders -->
            <path d="M995 555Q1080 560 1095 640L1100 800 1080 860 1000 865z" fill="url(#gray)"/>
            <path d="M1030 575q55 0 60 85l-20-5q-10-60-40-80z" fill="#e95645"/>
            <g fill="#222"><path d="M1005 640l75 5v30h-75zM1030 718l60-5v40h-60zM1010 815l60-8v25h-60z"/></g><path d="M1012 645h28l4 30h-28zM1030 720h28v38h-28z" fill="#9bbb3c"/>
            <g transform="translate(960 0)">
              <path d="M455 440L600 400 600 470 550 460 460 470z" fill="#b13d31"/>
              <path d="M440 790L540 770 510 880 460 900 440 850z" fill="#a83a2f"/>
              <path d="M448 480Q470 460 500 460 570 470 600 560 615 660 590 740L580 770 480 797 430 780z" fill="url(#gray)"/>
              <path d="M470 490q-20 30-18 100M450 700q5 60 25 90" fill="none"/>
              <path d="M470 485l60-8 10 25-60 5zM500 560l60-15 15 30-60 15q-20-5-15-30zM515 640l70-10 2 32-72 10zM505 715l70-12-5 38-50 8q-20-10-15-34z" fill="#2b2b2b"/>
              <path d="M500 562l20-5 8 30-18 3zM517 640h20l3 30h-22z" fill="#9bbb3c"/><path d="M535 555l15-3 8 25-15 3zM548 635h15l3 28h-15z" fill="#d44435"/>
              <path d="M440 580l25-5 5 25-25 5zM440 715l15-5 5 20-20 8z" fill="#d44435"/>
              <path d="M655 480Q700 570 690 660 680 730 650 770L600 780z" fill="#888"/>
              <path d="M650 750l90-30q-10 60-70 85l-60-5z" fill="#ba4033"/>

              <!-- centre panel -->
              <path d="M68 500L130 478 175 440 185 540 155 880 130 985 50 1000 45 950 120 860 133 720 130 560 85 535z" fill="#6d2217"/>
              <path d="M85 530L130 575 132 650 85 590z" fill="#fff"/>
              <path d="M183 480L370 438 440 475 440 490 215 528 180 522z" fill="#39944c"/><path d="M205 490l60-14 25 25-75 15zM290 470l70-16 40 22-80 15z" fill="#b9c4b8"/><path d="M215 500l70 5M295 475l90 10M240 480l15 30M330 462l10 25" stroke="#1d6430" stroke-width="5"/>
              <path d="M178 542L445 487 412 855 148 888z" fill="#5f1d13"/><path d="M178 542l-8 0-25 340 5 6z" fill="#8d2d20"/>
              <path d="M425 385l42-5v50l-20 15-5 60-22-20zM133 442l38-6 8 65-32 10z" fill="#73241a"/><path d="M440 385v50M455 385v45M148 440v60M160 440v55" fill="none"/>
              <g fill="#868484" stroke="#922f24" stroke-width="5"><ellipse cx="243" cy="590" rx="34" ry="39"/><ellipse cx="379" cy="563" rx="34" ry="38"/><ellipse cx="297" cy="685" rx="64" ry="74"/><ellipse cx="353" cy="787" rx="37" ry="40"/><ellipse cx="222" cy="808" rx="34" ry="38"/></g>
              <path d="M304 614l16 2-10 138-10 0zM232 557l9-3-6 68-8-3z" fill="#151010"/><path d="M190 830l15-35 40 50-20 0z" fill="#2c8d46"/><path d="M210 815l15-5-5 28-12-3z" fill="#fff"/><path d="M322 795l60 20-30 12z" fill="#2c8d46"/>
              <path d="M155 880l240-38v15l-240 35z" fill="#285d34"/><path d="M320 872l80-16-35 90-30-5z" fill="#5c1c13"/>
              <!-- right bracket -->
              <path d="M480 937Q452 925 462 895L510 885 590 825 612 810Q630 850 624 908z" fill="url(#tube)"/>
              <path d="M582 305L680 280Q715 300 712 390L655 400Q645 470 668 580 682 700 650 750 590 800 588 835L580 900 508 910Q510 840 560 775 600 730 606 650 600 560 555 465L585 430z" fill="url(#side)"/>
              <path d="M582 305L680 280Q715 300 712 375L705 408 658 390 596 395z" fill="url(#tube)"/>
              <path d="M552 315Q570 300 590 310 605 340 596 395L592 475Q585 490 555 455 590 380 552 315z" fill="#dc5041"/>
              <path d="M596 395l62-12-3 70-62 20M600 580l70 8" fill="none"/>
              <g fill="#33100c"><circle cx="608" cy="403" r="3"/><circle cx="640" cy="398" r="3"/><circle cx="608" cy="438" r="3"/><circle cx="640" cy="433" r="3"/><circle cx="530" cy="862" r="3"/><circle cx="565" cy="856" r="3"/><circle cx="528" cy="890" r="3"/><circle cx="562" cy="884" r="3"/></g>
            </g>

            <!-- front upper rod, plate, mid bracket -->
            <path d="M525 520L865 457Q880 490 868 527L535 588z" fill="#1f1f1f"/>
            <path d="M765 560q40 40 70-10l50 10-20 25-70 20z" fill="#e35242"/>
            <path d="M355 350L505 315 545 338 635 335 680 362 680 382 756 432 702 455 740 482Q748 510 742 540L600 568Q590 500 540 478L400 385z" fill="#808080"/>
            <path d="M355 350L362 343 415 375 550 462Q600 500 604 568L595 565Q585 510 535 480L400 390z" fill="#aaa"/>
            <path d="M596 500L740 482 740 540 604 566z" fill="#999" stroke="none"/>
            <path d="M535 372L615 355 668 380 582 402zM604 468l38-11 16 14-38 10z" fill="#222"/><path d="M575 410L655 388 720 415 635 437z" fill="#333"/><path d="M590 425L660 408 700 420 635 437z" fill="#fff"/>
            <ellipse cx="523" cy="413" rx="28" ry="13" fill="#e8e8e8"/><path d="M445 346l38-8 14 12-36 8z" fill="#666"/>
            <path d="M865 575l60-8-10 90 20 60-30-35Q890 640 865 610z" fill="#d34a3d"/>
            <path d="M930 515L1002 500Q985 600 1005 700 1018 800 985 860L940 790Q930 680 900 560z" fill="url(#side)"/>
            <path d="M848 432L965 410Q1005 430 1002 505L935 520 930 545 880 560z" fill="url(#tube)"/>
            <path d="M823 445Q840 425 865 432 895 450 890 530L868 560 852 552Q890 480 823 445z" fill="#de5243"/>
            <path d="M935 575l60-12M940 705l62-12" fill="none"/>
            <g fill="#33100c"><circle cx="955" cy="523" r="3"/><circle cx="986" cy="518" r="3"/><circle cx="953" cy="558" r="3"/><circle cx="984" cy="552" r="3"/></g>
            <path d="M1005 865l120-5-15 130-90 10-15-40z" fill="#70231a"/><path d="M1015 925q25 20 15 70M1030 920q25 20 15 70" fill="none"/>

            <!-- rear left limb -->
            <path d="M265 1060L232 1105 240 1125 215 1125 200 1145 205 1165 330 1248 348 1230 345 1210 372 1208 440 1120 440 1080z" fill="#343434"/>
            <path d="M235 1110l70 50 60 10M210 1135l130 90M262 1065l60 130M330 1180l40 30M250 1140l-15 30M300 1160l-20 50M320 1190l-15 40" fill="none"/>
            <path d="M262 1150l40 20-30 40-40-20z" fill="#777" stroke="none"/>
            <path d="M238 1183l54 44-52 76-55-44z" fill="url(#rod)"/>
            <circle cx="166" cy="1343" r="83" fill="url(#ball)"/>

            <!-- front frame -->
            <path d="M205 920Q240 870 262 930L270 1030 170 1050z" fill="#8a2f28"/>
            <path d="M190 372L290 350Q332 365 332 440L325 470 285 480 300 575 315 655Q290 680 262 655L232 430z" fill="url(#tube)"/>
            <path d="M230 435l52-8 16 145-56 10z" fill="#a33a31"/>
            <path d="M395 523L495 502Q530 515 530 580L527 612 480 628 474 700 485 810Q495 920 478 960L412 1040 395 1120 340 1138 430 920z" fill="url(#side)"/>
            <path d="M395 523L495 502Q532 515 531 590L520 620 482 625 480 602 427 612z" fill="url(#tube)"/>
            <path d="M412 1036Q445 1030 442 1110L340 1135 350 1060z" fill="url(#tube)"/>
            <path d="M190 372Q225 380 232 430L245 610Q262 668 305 665 330 650 368 570 365 535 395 523 425 530 428 585L414 680 428 790Q435 900 428 930 400 1000 360 1040L335 1130Q310 1170 280 1135L265 1080 272 985Q262 895 235 893 215 895 205 950L190 1030Q170 1065 135 1035L125 980 130 860Q90 740 90 680 90 600 135 545L155 430Q160 380 190 372z" fill="#ad3d34"/>
            <path d="M183 440L207 480 215 615Q200 580 162 580 175 510 183 440z" fill="#5a1c16"/><path d="M196 485l14 120q-20-25-45-25 30-20 31-95z" fill="#dc4b3d"/>
            <path d="M412 592Q425 640 388 748 370 710 330 705 350 650 412 592z" fill="#a03930"/><path d="M332 700l50-20 5 60q-20-30-55-40z" fill="#dc4b3d"/>
            <path d="M150 820Q170 850 207 850 175 900 173 950L153 948z" fill="#a03930"/><path d="M290 905Q300 970 348 970 315 1020 312 1066L298 1062z" fill="#8f3029"/>
            <ellipse cx="180" cy="710" rx="35" ry="58" fill="#d64a3d"/><path d="M168 665Q200 650 208 720L205 760Q170 740 165 690z" fill="#8b8b8b"/><path d="M188 670q22 10 20 60l-10-5z" fill="#555"/>
            <ellipse cx="345" cy="838" rx="34" ry="58" fill="#d64a3d"/><path d="M333 793Q365 780 374 850L370 885Q335 870 330 820z" fill="#8b8b8b"/><path d="M350 800q24 10 20 60l-10-5z" fill="#bbb"/>
            <path d="M425 612l58-8-5 65-55 10zM428 800l55-8M350 1070l55-12-8 55-52 12zM247 608l58-20" fill="none"/>
            <g fill="#33100c"><circle cx="191" cy="433" r="4"/><circle cx="389" cy="584" r="4"/><circle cx="160" cy="986" r="4"/><circle cx="301" cy="1094" r="4"/><circle cx="240" cy="450" r="3"/><circle cx="274" cy="446" r="3"/><circle cx="242" cy="490" r="3"/><circle cx="276" cy="484" r="3"/><circle cx="435" cy="625" r="3"/><circle cx="466" cy="621" r="3"/><circle cx="433" cy="660" r="3"/><circle cx="464" cy="655" r="3"/><circle cx="216" cy="972" r="3"/><circle cx="247" cy="968" r="3"/><circle cx="213" cy="1005" r="3"/><circle cx="243" cy="1000" r="3"/><circle cx="358" cy="1080" r="3"/><circle cx="388" cy="1076" r="3"/><circle cx="356" cy="1112" r="3"/><circle cx="386" cy="1107" r="3"/></g>

            <!-- front left leg -->
            <use href="#leg-back" /><use href="#limb" />
            <path d="M682 1040L725 1188Q770 1200 785 1250L812 1420 832 1438 850 1400 760 1040z" fill="#6f2116"/>
            <path d="M705 1040L860 1090 975 1020Q990 1060 970 1110 935 1170 948 1230L971 1350Q972 1400 930 1440 860 1465 828 1430L795 1240Q770 1200 727 1188z" fill="#84291b"/>
            <use href="#leg-detail" /><use href="#motor" />
            <path d="M803 950Q800 860 925 828 1000 840 1007 900L1005 965 925 1055Q905 1070 885 1050 800 990 803 950z" fill="#8f3431"/><path d="M803 950Q800 860 925 828L905 838Q815 870 812 945z" fill="#e85a4b"/>
            <g fill="#3b0f0e"><circle cx="893" cy="940" r="3"/><circle cx="875" cy="962" r="3"/><circle cx="920" cy="965" r="3"/><circle cx="902" cy="986" r="3"/><circle cx="822" cy="963" r="4"/><circle cx="974" cy="962" r="4"/><circle cx="910" cy="1045" r="4"/></g>

            <!-- front right leg -->
            <use href="#leg-back" x="1240" y="-246" /><use href="#limb" x="1194" y="-307" />
            <path d="M1875 765L1940 920Q1990 945 2003 980L2040 1160 2062 1175 2080 1140 2000 790z" fill="#6f2116"/>
            <path d="M1890 770L2030 830 2140 765 2155 710Q2180 760 2178 820 2150 880 2160 930L2198 1090Q2200 1140 2155 1180 2095 1205 2052 1165L2022 985Q1997 940 1940 920z" fill="#84291b"/>
            <use href="#leg-detail" x="1217" y="-264" />
            <path d="M2080 470L2095 500 2128 503 2150 515 2158 548 2145 580 2168 570 2186 600 2170 615 2165 630 2184 655 2180 690 2155 678 2145 690 2150 730 2130 770 2080 770 2082 818 2050 825 2030 805 2000 830 1980 800z" fill="#2a2a2a"/>
            <use href="#motor" x="1160" y="-250" />
            <path d="M2095 500l55 15M2145 580l40 20M2145 690l35 0M1990 515l60-15" fill="none" stroke="#111"/>
            <path d="M1960 690Q1950 590 2060 558 2140 550 2150 600L2148 680 2112 770Q2100 785 2030 770 1965 750 1960 690z" fill="#8f3431"/><path d="M1960 690Q1950 590 2060 558L2040 568Q1960 610 1970 695z" fill="#e85a4b"/>
            <g fill="#3b0f0e"><circle cx="2069" cy="660" r="3"/><circle cx="2092" cy="663" r="3"/><circle cx="2058" cy="705" r="3"/><circle cx="2081" cy="707" r="3"/><circle cx="2134" cy="615" r="4"/><circle cx="2016" cy="752" r="4"/><circle cx="2099" cy="764" r="4"/></g>
          </g>

          <g fill="#3fc1ec" stroke="#3fc1ec" stroke-width="6"><path d="M1145 932L1168 730M1145 932L1030 848M1145 932L1335 896" fill="none"/><path d="M1171 710l-12 32 24 2zM1355 889l-32-10 5 28z"/><circle cx="1020" cy="838" r="10"/></g>
        </svg>

        <svg class="cursor" width="13" height="20" viewBox="0 0 13 20"><path d="M1 1v15l4-3 2 6 3-1-3-6h5z" fill="#fff" stroke="#333"/></svg>

        <svg class="triad" width="70" height="74" viewBox="0 0 70 74">
          <g stroke-width="4"><path d="M38 50V34" stroke="#09c90d"/><path d="M38 50L24 53" stroke="#0a12e8"/><path d="M37 49l10 8" stroke="#f0200c"/></g>
          <path d="M41 24l-6 12h9z" fill="#09c90d"/><path d="M13 55l11-6 1 8z" fill="#0a12e8"/><path d="M54 63l-5-10-6 7z" fill="#f0200c"/>
          <text x="37" y="18" fill="#25b52d">Y</text><text x="2" y="60" fill="#1a1fae">Z</text><text x="55" y="70" fill="#d23430">X</text>
        </svg>

        <svg class="viewcube" width="126" height="126" viewBox="0 0 126 126">
          <g fill="#c9c9c9" stroke="#7a7a7a"><path d="M62 3l6 10H56zM62 123l6-10H56zM3 63l9-6v12zM122 63l-9-6v12zM94 17l12 4-4 3q11 11 14 21l-4 2q-3-11-12-20l-4 4zM94 109l3-14 3 4q9-8 12-19l4 1q-3 12-13 21l5 3z"/></g>
          <path d="M35 44Q40 32 62 32 84 33 91 46L93 62 91 80Q82 92 62 93 42 92 34 78L32 60z" fill="#c6c6c6"/>
          <path d="M44 46l6-11 24-1 9 12-19 6zM35 49q6 0 15 10l2 25q-8 0-17-10zM63 62q14-8 26-4l-2 18q-10 11-23 11z" fill="#f1f1f1"/>
          <text class="face small" x="56" y="46" transform="rotate(186 62 42)">上</text><text class="face" x="34" y="74" transform="rotate(8 42 68)">前</text><text class="face big" x="66" y="80" transform="rotate(-6 75 74)">右</text>
          <path d="M62 63l3-32" stroke="#17cc1c" stroke-width="1.500"/><path d="M62 63L32 69" stroke="#1719d8" stroke-width="1.500"/><path d="M62 63l20 15" stroke="#e02010" stroke-width="1.500"/>
          <text x="62" y="25" fill="#12c31a">Y</text><text x="19" y="74" fill="#0b10c8">Z</text><text x="83" y="86" fill="#e02010">X</text>
        </svg>
      </section>

      <aside class="rail">
        <button class="bare" aria-label="文件夹"><svg width="20" height="20" viewBox="0 0 20 20"><path d="M1 17V3q0-1 1-1h5l3 3h8q1 0 1 1v11q0 1-1 1H2q-1 0-1-1z" class="ln" stroke-width="1.800"/></svg></button>
        <button class="bare" aria-label="录像"><svg width="24" height="16" viewBox="0 0 24 16"><rect width="15" height="16" rx="3" fill="#24282f"/><path d="M16 7l7-6v14l-7-6z" fill="#24282f"/></svg></button>
        <button class="bare" aria-label="参数"><svg width="20" height="20" viewBox="0 0 20 20"><circle cx="10" cy="10" r="9.700" fill="#24282f"/><path d="M7.500 15V6H11q3 0 3 2.700T11 11.400H7.500" fill="none" stroke="#fff" stroke-width="2.200"/></svg></button>
        <button class="bare" aria-label="装配体"><svg width="20" height="20" viewBox="0 0 20 20"><path d="M10 1l9 5v8l-9 5-9-5V6zM1 6l9 6 9-6M1 14l9-6 9 6M10 1v7M10 12v7" class="ln" stroke-width="1.500"/></svg></button>
        <button class="bare" aria-label="工具"><svg width="20" height="20" viewBox="0 0 20 20"><path d="M3 17L12 8" fill="none" stroke="#24282f" stroke-width="5" stroke-linecap="round"/><path d="M17 1l-4 4 1 2 2 1 4-3q1 4-2 6-4 2-7 0T9 4q2-4 8-3z" fill="#24282f"/><circle cx="3" cy="17" r="1.200" fill="#fff"/></svg></button>
        <button class="bare" aria-label="材质"><svg width="17" height="17" viewBox="0 0 17 17"><path d="M.8.8h15.400v15.400H.8z" fill="#fff" stroke="#24282f" stroke-width="1.500"/><path d="M8.500 1H16v7.500H8.500zM1 8.500h7.500V16H1z" fill="#24282f"/></svg></button>
        <button class="bare" aria-label="手册"><svg width="17" height="20" viewBox="0 0 17 20"><path d="M3 0h14v15l-1 1v4H3q-3 0-3-3V3q0-3 3-3z" fill="#24282f"/><path d="M4 5h9M4 8h9" stroke="#fff" stroke-width="1.500"/><path d="M3 15h12v3H3q-2-1 0-3z" fill="#fff"/></svg></button>
        <button class="bare note" aria-label="反馈"><svg width="20" height="22" viewBox="0 0 20 22"><path d="M12 3H1v18h16v-9" fill="none" stroke="#3c4058" stroke-width="2"/><path d="M4 10h5M4 14h10M11 10l8-9" fill="none" stroke="#3c4058" stroke-width="2"/></svg></button>
      </aside>
    </main>

    <footer class="docs">
      <button v-for="(d, i) in docTabs" :key="d" class="bare doc" :class="{ on: i === 0 }">
        <svg v-if="i === 0" width="13" height="12" viewBox="0 0 17 15"><path d="M0 5l2-2h4v-2l3-1h8l-1 5-3 3-2 1v4l-3 2H0z" fill="#222"/><path d="M11 2.500h3M13 6l2-3" stroke="#fff" stroke-width="1.200"/></svg>
        <svg v-else width="14" height="11" viewBox="0 0 14 11"><path d="M0 7l3-1 1-5 3-1 2 4 2 1 1-2 2 1v4l-2 3H0z" fill="#444a55"/></svg>
        <span>{{ d }}</span>
        <svg v-if="i === 0" class="dx" width="8" height="8" viewBox="0 0 8 8"><path d="M1 1l6 6M7 1L1 7" stroke="#555"/></svg>
      </button>
    </footer>
    <div class="taskbar"></div>
  </div>
</template>

<style>
body { margin: 0; background: #fff; }
</style>

<style scoped>
.app { height: 100vh; display: flex; flex-direction: column; overflow: hidden; font-family: "Noto Sans", "Noto Sans CJK SC", sans-serif; font-size: 12px; color: #333; background: #fff; }
.app * { box-sizing: border-box; }
.bare { border: 0; background: none; padding: 0; margin: 0; font: inherit; color: inherit; display: flex; align-items: center; justify-content: center; white-space: nowrap; }
svg { flex: none; display: block; }
.ln { fill: none; stroke: #22272c; }
.thin { stroke-width: 1px; }
.fav { width: 13px; height: 17px; }

.tabstrip { height: 35px; background: #dee1e6; display: flex; flex: none; padding-left: 8px; }
.browser-tab { width: 241px; background: #fff; border-radius: 8px 8px 0 0; display: flex; align-items: center; padding: 0 11px 0 14px; gap: 10px; }
.tab-x { margin-left: auto; }
.newtab { width: 44px; }
.winctl { margin-left: auto; display: flex; height: 30px; }
.winctl button { width: 46px; }

.browser-bar { height: 38px; flex: none; display: flex; align-items: flex-end; padding-left: 7px; }
.nav { width: 32px; height: 34px; }
.omnibox { flex: 1; height: 34px; margin-left: 6px; background: #f1f3f4; border-radius: 17px; display: flex; align-items: center; gap: 10px; padding: 0 11px 2px; }
.omnibox input { border: 0; background: none; font: inherit; font-size: 14px; flex: 1; color: #222; padding: 0; outline: 0; }
.ext { display: flex; height: 34px; margin: 0 4px 0 6px; }
.ext button { width: 32px; }

.header { height: 43px; flex: none; border-bottom: 1px solid #dcdcdc; display: flex; align-items: center; padding: 0 0 2px 12px; }
.brand { display: flex; align-items: center; width: 143px; color: #1b66ae; }
.brand-txt { font-size: 24px; line-height: 28px; font-weight: 500; margin-left: -2px; }
.brand-txt b { font-weight: 500; color: #14509a; }
.doc-name { font-size: 20px; line-height: 24px; font-weight: 300; color: #111; border-bottom: 1px dotted #555; }
.badge { background: #5a7db6; color: #fff; border-radius: 4px; width: 30px; height: 17px; line-height: 17px; text-align: center; margin: 10px 12px 0 5px; }
.btn { border: 0; background: #0a70dd; color: #fff; font: inherit; height: 28px; border-radius: 3px; display: flex; align-items: center; justify-content: center; gap: 8px; padding: 0; white-space: nowrap; }
.b1 { width: 54px; }
.b2 { width: 76px; margin-left: 12px; }
.b3 { width: 97px; margin-left: 8px; gap: 4px; }
.tools { display: flex; gap: 16px; margin: 0 23px 0 16px; }
.save { margin-right: 14px; }
.okico { margin: 0 4px 0 13px; }
.saved { color: #555; text-decoration: none; border-bottom: 1px solid #555; line-height: 18px; padding: 0 4px; }
.search { margin-left: auto; width: 194px; height: 32px; border: 1px solid #ddd; border-radius: 3px; display: flex; align-items: center; padding: 0 9px 0 8px; }
.search input { border: 0; outline: 0; font: inherit; font-size: 14px; width: 100%; min-width: 0; padding: 0; }
.search input::placeholder { color: #999; opacity: 1; }
.right-tools { display: flex; align-items: center; gap: 16px; margin: 0 5px 0 17px; }
.like { gap: 3px; font-size: 20px; line-height: 24px; width: 43px; justify-content: flex-start; font-weight: 300; }
.pair { gap: 13px; }
.ulogo { margin-left: 5px; }
.user { gap: 6px; font-size: 14px; color: #444; font-weight: 300; }

.ribbon { height: 81px; flex: none; border-bottom: 1px solid #dcdcdc; display: flex; padding: 5px 0; }
.grp { display: flex; margin-left: 8px; padding-right: 5px; border-right: 1px solid #d9d9d9; }
.grp.first { margin-left: 9px; padding-right: 8px; }
.grp.last { border: 0; }
.undo { width: 74px; display: flex; flex-direction: column; font-size: 14px; }
.undo button { height: 35px; gap: 6px; justify-content: flex-start; }
.item { width: 70px; flex-direction: column; gap: 2px; font-size: 14px; line-height: 22px; padding-top: 2px; }
.off { color: #aaa; }

.rtabs { height: 23px; flex: none; border-bottom: 1px solid #dcdcdc; display: flex; }
.rtabs button { padding: 0 13px 1px; }
.rtabs .on { border: 1px solid #dcdcdc; border-width: 0 1px; font-weight: 700; padding: 0 12px 1px; color: #222; }
.rtabs .fold { margin-left: auto; padding: 0 11px; }

.main { flex: 1; min-height: 0; display: flex; }
.panel { width: 220px; flex: none; overflow: hidden; box-shadow: 2px 0 10px #0000001a; }
.ptabs { display: flex; height: 29px; font-size: 14px; }
.ptabs button { flex: 1; background: #e9e9e9; color: #444; padding-bottom: 1px; }
.ptabs .on { background: #fff; color: #222; font-weight: 500; }
.root { display: flex; align-items: center; height: 41px; padding: 0 0 2px 9px; gap: 8px; font-size: 16px; font-weight: 500; }
ul { list-style: none; margin: 0; padding: 0; font-size: 14px; white-space: nowrap; }
.tree li { height: 30px; display: flex; align-items: center; padding: 0 0 1px 14px; position: relative; }
.tree .dim { color: #999; }
.exp { width: 12px; margin: 0 7px 3px 0; flex: none; }
.cube { width: 14px; height: 14px; margin-right: 8px; }
.cube.wide { width: 16px; }
.mark { position: absolute; left: 45px; top: -1px; }
.mhead { height: 28px; padding: 0 0 2px 10px; gap: 10px; font-size: 14px; }
.mates li { height: 30px; display: flex; align-items: center; padding-left: 13px; gap: 4px; }
.refs { color: #8a8a8a; }

.canvas { flex: 1; min-width: 0; position: relative; overflow: hidden; }
.handle { position: absolute; left: 0; top: 328px; }
.viewbar { position: absolute; left: 548px; top: 5px; height: 47px; padding: 0 3px 0 1px; background: #e3e6ef; border-radius: 4px; display: flex; box-shadow: 1px 1px 3px #0002; }
.viewbar button { padding-bottom: 2px; }
.c44 { width: 44px; }
.c24 { width: 23px; }
.viewbar .on { background: #cfdbe5; }
.robot { position: absolute; left: 360px; top: 120px; }
.cursor { position: absolute; left: 222px; top: 514px; }
.triad { position: absolute; left: 12px; top: 718px; font-size: 14px; }
.viewcube { position: absolute; right: 32px; top: 17px; font-size: 15px; }
.face { font-size: 16px; fill: #222; }
.small { font-size: 12px; }
.big { font-size: 18px; }
.rail { width: 32px; flex: none; background: #e1e5ef; position: relative; }
.rail button { width: 32px; height: 44px; }
.rail .note { position: absolute; right: 6px; bottom: -4px; width: 38px; height: 38px; border-radius: 19px; background: #fff; box-shadow: 0 0 6px #0003; }

.docs { height: 30px; flex: none; display: flex; gap: 2px; padding: 0 2px 3px; }
.doc { width: 160px; background: #e2e5ee; border-radius: 4px 4px 0 0; justify-content: flex-start; padding-left: 21px; gap: 4px; color: #444; }
.doc.on { background: #fff; border: 1px solid #ddd; border-bottom: 2px solid #1e86c4; }
.dx { margin: 0 16px 0 auto; }
.taskbar { height: 2px; flex: none; background: linear-gradient(90deg, #302f2d 293px, #777 293px 341px, #302f2d 341px); }
</style>
